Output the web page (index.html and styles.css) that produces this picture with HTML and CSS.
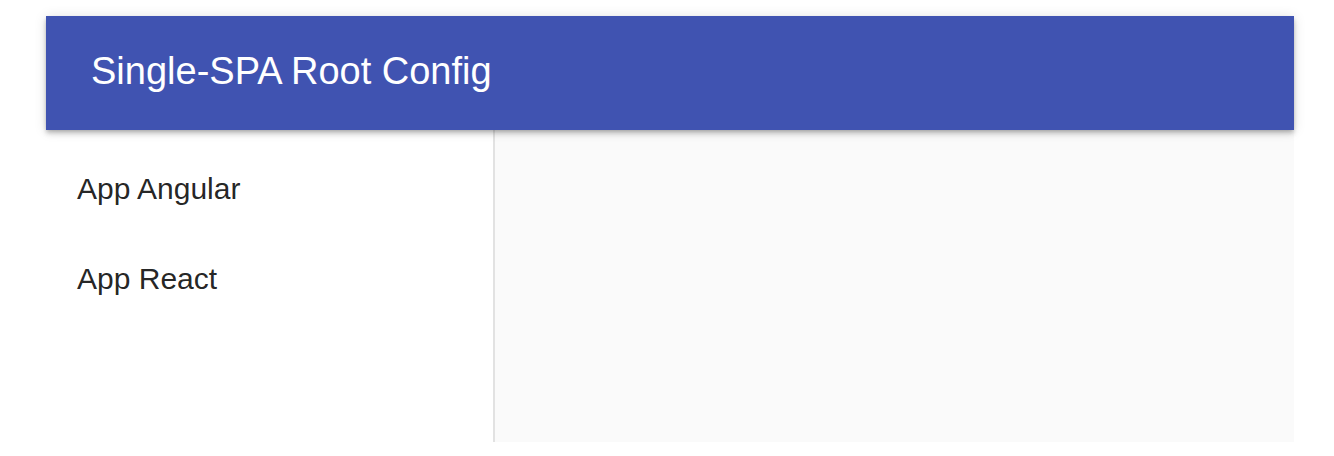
FILE: index.html
```html
<!DOCTYPE html>
<html>
<head>
<meta charset="utf-8">
<link rel="stylesheet" href="styles.css">
</head>
<body>
<div class="page">
  <div class="app">
    <header class="toolbar">Single-SPA Root Config</header>
    <div class="main">
      <nav class="sidenav">
        <a class="nav-item">App Angular</a>
        <a class="nav-item">App React</a>
      </nav>
      <section class="content"></section>
    </div>
  </div>
</div>
</body>
</html>
```
FILE: styles.css
```css
html, body {
  margin: 0;
  padding: 0;
  background: #ffffff;
}
.page {
  padding: 16px 40px 14px 46px;
  height: 456px;
  box-sizing: border-box;
  font-family: "Liberation Sans", Arial, sans-serif;
}
.app {
  display: flex;
  flex-direction: column;
  height: 100%;
}
.toolbar {
  position: relative;
  z-index: 2;
  height: 114px;
  line-height: 110px;
  background: #4053b1;
  color: #ffffff;
  font-size: 38px;
  padding-left: 45px;
  box-shadow: 0 2px 4px -1px rgba(0,0,0,.2), 0 4px 5px 0 rgba(0,0,0,.14), 0 1px 12px 0 rgba(0,0,0,.12);
}
.main {
  flex: 1;
  display: flex;
  min-height: 0;
}
.sidenav {
  width: 447px;
  background: #ffffff;
  border-right: 2px solid #e2e2e2;
  padding-top: 14px;
  display: flex;
  flex-direction: column;
}
.nav-item {
  display: block;
  height: 90px;
  line-height: 90px;
  padding-left: 31px;
  font-size: 30px;
  color: rgba(0,0,0,.87);
}
.content {
  flex: 1;
  background: #fafafa;
}
```
